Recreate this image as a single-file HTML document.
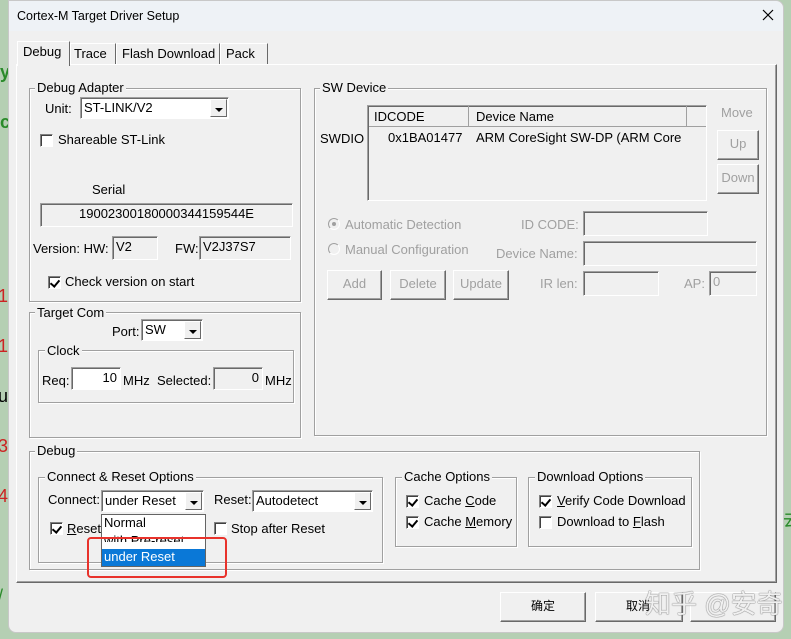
<!DOCTYPE html>
<html><head><meta charset="utf-8"><style>
*{margin:0;padding:0;box-sizing:border-box}
body{width:791px;height:639px;overflow:hidden;background:#b5cfb3;font-family:"Liberation Sans","Noto Sans CJK SC",sans-serif;font-size:13px;color:#000;position:relative}
.a{position:absolute}
.t{position:absolute;white-space:nowrap;line-height:16px}
.g{position:absolute;border:1px solid #a0a0a0;box-shadow:1px 1px 0 #fff inset,1px 1px 0 #fff}
.lg{position:absolute;background:#f0f0f0;padding:0 2px;line-height:16px;white-space:nowrap}
.ed{position:absolute;border:1px solid;border-color:#a0a0a0 #fff #fff #a0a0a0;box-shadow:1px 1px 0 #696969 inset;background:#f0f0f0;padding:2px 3px;line-height:16px;white-space:nowrap}
.wh{background:#fff}
.dd{position:absolute;background:#fff;border:1px solid;border-color:#a0a0a0 #fff #fff #a0a0a0;box-shadow:1px 1px 0 #696969 inset;padding:1px 3px;line-height:18px}
.dd .ar{position:absolute;right:1px;top:1px;bottom:1px;width:17px;background:#f0f0f0;border:1px solid;border-color:#fff #696969 #696969 #fff}
.dd .ar:after{content:"";position:absolute;left:4px;top:8px;border:4px solid transparent;border-top:4px solid #000;border-bottom:0}
.cb{position:absolute;width:13px;height:13px;background:#fff;border:1px solid;border-color:#808080 #fff #fff #808080;box-shadow:1px 1px 0 #404040 inset}
.cb.on:after{content:"";position:absolute;left:3px;top:1px;width:4px;height:7px;border:solid #000;border-width:0 2px 2px 0;transform:rotate(40deg)}
.bt{position:absolute;background:#f0f0f0;border:1px solid;border-color:#fff #696969 #696969 #fff;box-shadow:-1px -1px 0 #a0a0a0 inset;text-align:center;line-height:26px;color:#a0a0a0}
.gr{color:#a0a0a0}
.rd{position:absolute;width:12px;height:12px;border-radius:50%;border:1px solid;border-color:#a0a0a0 #fff #fff #a0a0a0;background:#f0f0f0}
</style></head><body>
<div class="t" style="left:0;top:64px;color:#2a8a2a;font-size:18px;font-weight:bold">y</div>
<div class="t" style="left:0;top:114px;color:#2a8a2a;font-size:18px;font-weight:bold">c</div>
<div class="t" style="left:-2px;top:288px;color:#c22;font-size:18px">1</div>
<div class="t" style="left:-2px;top:338px;color:#c22;font-size:18px">1</div>
<div class="t" style="left:-2px;top:388px;font-size:18px">u</div>
<div class="t" style="left:-2px;top:438px;color:#c22;font-size:18px">3</div>
<div class="t" style="left:-2px;top:488px;color:#c22;font-size:18px">4</div>
<div class="t" style="left:-2px;top:588px;color:#2a8a2a;font-size:18px">/</div>
<div class="t" style="left:783px;top:512px;color:#2a8a2a;font-size:18px">去</div>

<div class="a" style="left:8px;top:0;width:776px;height:633px;background:#f0f0f0;border:1px solid #c8c8c8;border-radius:0 8px 8px 8px"></div>
<div class="a" style="left:9px;top:1px;width:774px;height:30px;background:#eef2f6;border-radius:0 8px 0 0"></div>
<div class="t" style="left:17px;top:8px;font-size:12.5px">Cortex-M Target Driver Setup</div>
<svg class="a" style="left:762px;top:9px" width="12" height="12"><path d="M1 1L11 11M11 1L1 11" stroke="#000" stroke-width="1.2"/></svg>

<div class="a" style="left:16px;top:64px;width:761px;height:519px;border:1px solid;border-color:#fff #696969 #696969 #fff;box-shadow:-1px -1px 0 #a0a0a0 inset"></div>
<div class="a" style="left:17px;top:41px;width:53px;height:25px;background:#f0f0f0;border:1px solid;border-color:#fff #696969 transparent #fff;border-bottom:none"></div>
<div class="t" style="left:23px;top:44px">Debug</div>
<div class="a" style="left:70px;top:43px;width:46px;height:21px;border:1px solid;border-color:#fff #696969 transparent #fff;border-bottom:none"></div>
<div class="t" style="left:74px;top:46px">Trace</div>
<div class="a" style="left:116px;top:43px;width:104px;height:21px;border:1px solid;border-color:#fff #696969 transparent #fff;border-bottom:none"></div>
<div class="t" style="left:122px;top:46px">Flash Download</div>
<div class="a" style="left:220px;top:43px;width:48px;height:21px;border:1px solid;border-color:#fff #696969 transparent #fff;border-bottom:none"></div>
<div class="t" style="left:226px;top:46px">Pack</div>

<div class="g" style="left:29px;top:88px;width:272px;height:214px"></div>
<div class="lg" style="left:35px;top:80px">Debug Adapter</div>
<div class="t" style="left:45px;top:101px">Unit:</div>
<div class="dd" style="left:80px;top:97px;width:149px;height:22px">ST-LINK/V2<div class="ar"></div></div>
<div class="cb" style="left:40px;top:134px"></div>
<div class="t" style="left:58px;top:132px">Shareable ST-Link</div>
<div class="t" style="left:92px;top:182px">Serial</div>
<div class="ed" style="left:40px;top:203px;width:253px;height:24px;text-align:center">19002300180000344159544E</div>
<div class="t" style="left:33px;top:241px">Version: HW:</div>
<div class="ed" style="left:112px;top:236px;width:46px;height:24px">V2</div>
<div class="t" style="left:175px;top:241px">FW:</div>
<div class="ed" style="left:199px;top:236px;width:92px;height:24px">V2J37S7</div>
<div class="cb on" style="left:48px;top:276px"></div>
<div class="t" style="left:65px;top:274px">Check version on start</div>

<div class="g" style="left:29px;top:312px;width:272px;height:126px"></div>
<div class="lg" style="left:35px;top:305px">Target Com</div>
<div class="t" style="left:112px;top:324px">Port:</div>
<div class="dd" style="left:141px;top:319px;width:62px;height:22px">SW<div class="ar"></div></div>
<div class="g" style="left:38px;top:350px;width:256px;height:53px"></div>
<div class="lg" style="left:45px;top:343px">Clock</div>
<div class="t" style="left:42px;top:373px">Req:</div>
<div class="ed wh" style="left:71px;top:367px;width:50px;height:23px;text-align:right">10</div>
<div class="t" style="left:123px;top:373px">MHz</div>
<div class="t" style="left:157px;top:373px">Selected:</div>
<div class="ed" style="left:213px;top:367px;width:50px;height:23px;text-align:right">0</div>
<div class="t" style="left:265px;top:373px">MHz</div>

<div class="g" style="left:314px;top:88px;width:453px;height:348px"></div>
<div class="lg" style="left:320px;top:80px">SW Device</div>
<div class="t" style="left:320px;top:131px">SWDIO</div>
<div class="a" style="left:367px;top:105px;width:340px;height:96px;border:1px solid;border-color:#a0a0a0 #fff #fff #a0a0a0;box-shadow:1px 1px 0 #696969 inset"></div>
<div class="a" style="left:369px;top:106px;width:337px;height:21px;border-bottom:1px solid #a0a0a0"></div>
<div class="a" style="left:468px;top:106px;width:1px;height:21px;background:#a0a0a0"></div>
<div class="a" style="left:686px;top:106px;width:1px;height:21px;background:#a0a0a0"></div>
<div class="t" style="left:374px;top:109px">IDCODE</div>
<div class="t" style="left:476px;top:109px">Device Name</div>
<div class="t" style="left:388px;top:130px">0x1BA01477</div>
<div class="t" style="left:476px;top:130px">ARM CoreSight SW-DP (ARM Core</div>
<div class="t gr" style="left:721px;top:105px">Move</div>
<div class="bt" style="left:717px;top:130px;width:42px;height:30px">Up</div>
<div class="bt" style="left:717px;top:164px;width:42px;height:30px">Down</div>
<div class="rd" style="left:328px;top:218px"></div><div class="a" style="left:332px;top:222px;width:4px;height:4px;border-radius:50%;background:#a0a0a0"></div>
<div class="t gr" style="left:345px;top:217px">Automatic Detection</div>
<div class="rd" style="left:328px;top:243px"></div>
<div class="t gr" style="left:345px;top:242px">Manual Configuration</div>
<div class="t gr" style="left:521px;top:217px">ID CODE:</div>
<div class="ed" style="left:583px;top:211px;width:125px;height:25px"></div>
<div class="t gr" style="left:496px;top:246px">Device Name:</div>
<div class="ed" style="left:583px;top:241px;width:174px;height:25px"></div>
<div class="bt" style="left:327px;top:270px;width:55px;height:30px">Add</div>
<div class="bt" style="left:390px;top:270px;width:56px;height:30px">Delete</div>
<div class="bt" style="left:453px;top:270px;width:56px;height:30px">Update</div>
<div class="t gr" style="left:540px;top:276px">IR len:</div>
<div class="ed" style="left:583px;top:271px;width:76px;height:25px"></div>
<div class="t gr" style="left:684px;top:276px">AP:</div>
<div class="ed" style="left:709px;top:271px;width:48px;height:25px;color:#a0a0a0">0</div>

<div class="g" style="left:29px;top:451px;width:671px;height:119px"></div>
<div class="lg" style="left:35px;top:443px">Debug</div>
<div class="g" style="left:38px;top:477px;width:345px;height:86px"></div>
<div class="lg" style="left:45px;top:469px">Connect &amp; Reset Options</div>
<div class="t" style="left:48px;top:492px">Connect:</div>
<div class="dd" style="left:101px;top:490px;width:103px;height:22px">under Reset<div class="ar"></div></div>
<div class="t" style="left:214px;top:492px">Reset:</div>
<div class="dd" style="left:252px;top:490px;width:121px;height:22px">Autodetect<div class="ar"></div></div>
<div class="cb on" style="left:50px;top:522px"></div>
<div class="t" style="left:67px;top:521px"><u>R</u>eset</div>
<div class="cb" style="left:214px;top:522px"></div>
<div class="t" style="left:231px;top:521px">Stop after Reset</div>
<div class="a" style="left:101px;top:514px;width:105px;height:53px;background:#fff;border:1px solid #646464"></div>
<div class="t" style="left:104px;top:515px">Normal</div>
<div class="t" style="left:104px;top:532px;height:10px;overflow:hidden;line-height:18px">with Pre-reset</div>
<div class="a" style="left:102px;top:549px;width:103px;height:17px;background:#0a78d7"></div>
<div class="t" style="left:104px;top:549px;color:#fff">under Reset</div>
<div class="a" style="left:87px;top:537px;width:140px;height:41px;border:2px solid #e8322b;border-radius:4px"></div>

<div class="g" style="left:395px;top:477px;width:122px;height:70px"></div>
<div class="lg" style="left:402px;top:469px">Cache Options</div>
<div class="cb on" style="left:406px;top:495px"></div>
<div class="t" style="left:424px;top:493px">Cache <u>C</u>ode</div>
<div class="cb on" style="left:406px;top:516px"></div>
<div class="t" style="left:424px;top:514px">Cache <u>M</u>emory</div>

<div class="g" style="left:528px;top:477px;width:164px;height:70px"></div>
<div class="lg" style="left:535px;top:469px">Download Options</div>
<div class="cb on" style="left:539px;top:495px"></div>
<div class="t" style="left:557px;top:493px"><u>V</u>erify Code Download</div>
<div class="cb" style="left:539px;top:516px"></div>
<div class="t" style="left:557px;top:514px">Download to <u>F</u>lash</div>

<div class="bt" style="left:500px;top:592px;width:86px;height:30px;color:#000;font-size:12px">确定</div>
<div class="bt" style="left:595px;top:592px;width:88px;height:30px;color:#000;font-size:12px;text-align:left;padding-left:30px">取消</div>
<div class="bt" style="left:690px;top:592px;width:86px;height:30px"></div>
<div class="t" style="left:645px;top:588px;font-size:26px;line-height:32px;color:rgba(255,255,255,.9);text-shadow:0 0 1px #666,0 0 1px #666"><span>知乎</span> @安奇</div>
</body></html>
